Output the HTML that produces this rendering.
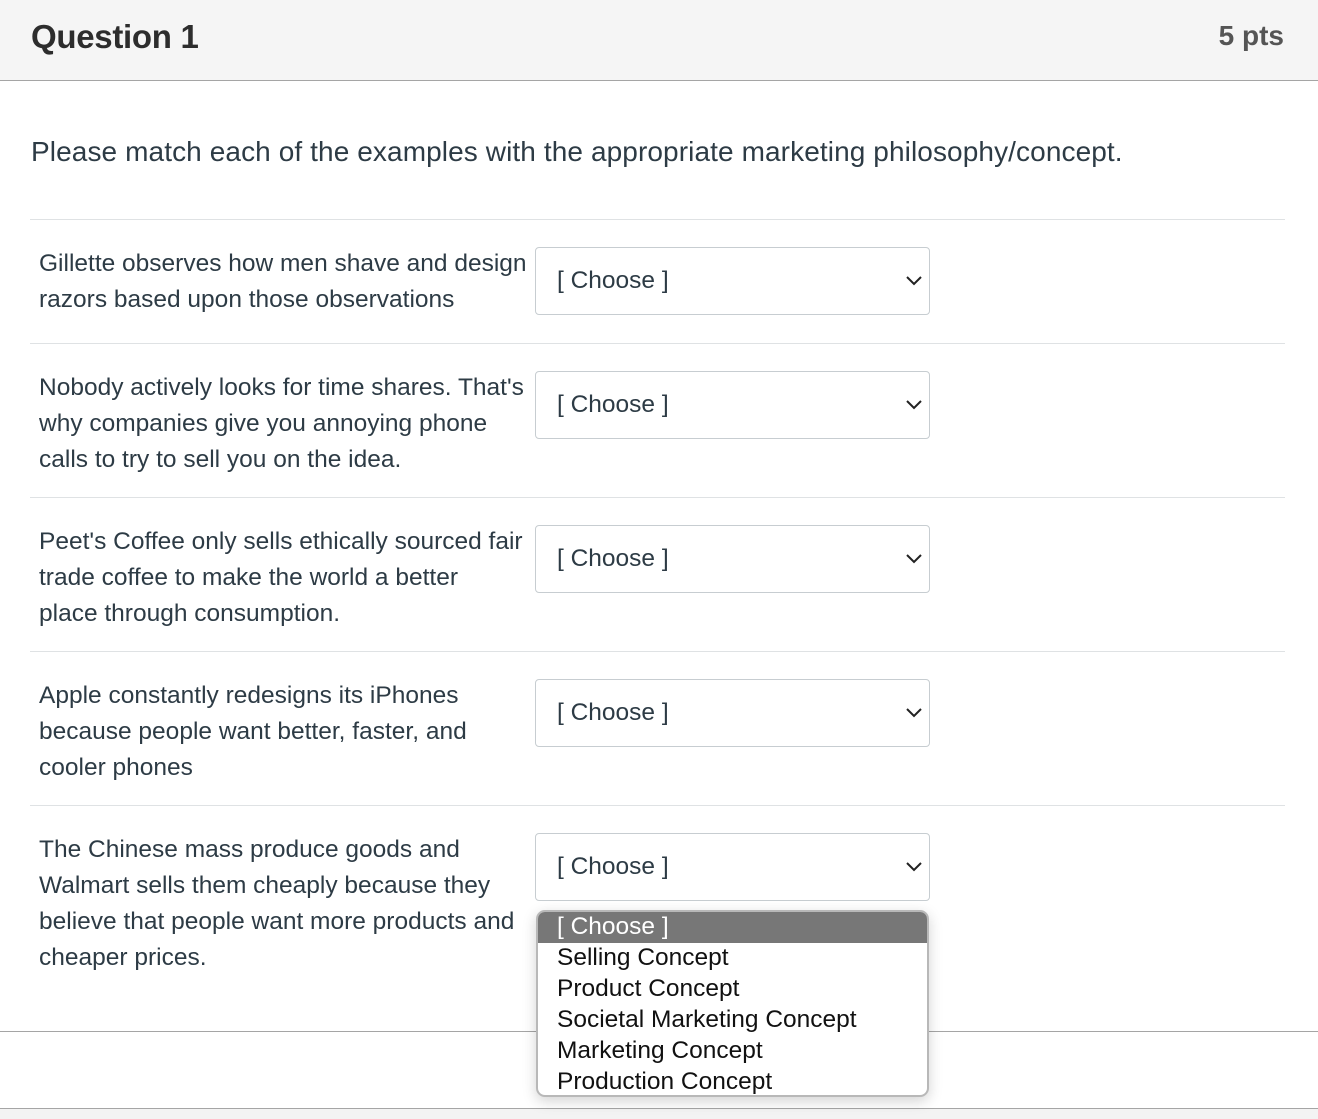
<!DOCTYPE html>
<html><head><style>
*{margin:0;padding:0;box-sizing:border-box}
body{width:1318px;height:1119px;position:relative;background:#fff;font-family:"Liberation Sans",Arial,sans-serif;color:#2d3b45;overflow:hidden}
.hdr{position:absolute;left:0;top:0;width:1318px;height:81px;background:#f5f5f5;border-bottom:1px solid #a5a5a5}
.q{position:absolute;left:31px;top:18px;font-size:33px;font-weight:bold;color:#2d2d2d;letter-spacing:-0.3px}
.pts{position:absolute;right:34px;top:20px;font-size:28px;font-weight:bold;color:#555}
.intro{position:absolute;left:31px;top:136px;font-size:28px;color:#2d3b45;letter-spacing:0.1px;white-space:nowrap}
.sep{position:absolute;left:30px;width:1255px;height:1px;background:#dfe2e4}
.txt{position:absolute;left:39px;font-size:24.5px;line-height:36px;color:#2d3b45;white-space:nowrap}
.sel{position:absolute;left:535px;width:395px;height:68px;border:1px solid #c7cdd1;border-radius:4px;background:#fff}
.sel span{position:absolute;left:21px;top:19px;font-size:24.5px;color:#2d3b45}
.sel svg{position:absolute;right:5px;top:25px}
.full{position:absolute;left:0;width:1318px;height:1px;background:#a5a5a5}
.dd{position:absolute;left:536px;top:910px;width:393px;height:187px;border:2px solid #b8b8b8;border-radius:9px;background:#fff;overflow:hidden;box-shadow:0 4px 14px rgba(0,0,0,.18)}
.dd div{height:31px;line-height:29px;padding-left:19px;font-size:24.5px;color:#111}
.dd div.h{background:#777;color:#fff}
</style></head><body>
<div class="hdr"><div class="q">Question 1</div><div class="pts">5 pts</div></div>
<div class="intro">Please match each of the examples with the appropriate marketing philosophy/concept.</div>

<div class="sep" style="top:219px"></div>
<div class="txt" style="top:246px">Gillette observes how men shave and design<br>razors based upon those observations</div>
<div class="sel" style="top:247px"><span>[ Choose ]</span><svg width="20" height="14" viewBox="0 0 20 14"><path d="M3 4l7 7 7-7" fill="none" stroke="#222" stroke-width="2"/></svg></div>

<div class="sep" style="top:343px"></div>
<div class="txt" style="top:370px">Nobody actively looks for time shares. That's<br>why companies give you annoying phone<br>calls to try to sell you on the idea.</div>
<div class="sel" style="top:371px"><span>[ Choose ]</span><svg width="20" height="14" viewBox="0 0 20 14"><path d="M3 4l7 7 7-7" fill="none" stroke="#222" stroke-width="2"/></svg></div>

<div class="sep" style="top:497px"></div>
<div class="txt" style="top:524px">Peet's Coffee only sells ethically sourced fair<br>trade coffee to make the world a better<br>place through consumption.</div>
<div class="sel" style="top:525px"><span>[ Choose ]</span><svg width="20" height="14" viewBox="0 0 20 14"><path d="M3 4l7 7 7-7" fill="none" stroke="#222" stroke-width="2"/></svg></div>

<div class="sep" style="top:651px"></div>
<div class="txt" style="top:678px">Apple constantly redesigns its iPhones<br>because people want better, faster, and<br>cooler phones</div>
<div class="sel" style="top:679px"><span>[ Choose ]</span><svg width="20" height="14" viewBox="0 0 20 14"><path d="M3 4l7 7 7-7" fill="none" stroke="#222" stroke-width="2"/></svg></div>

<div class="sep" style="top:805px"></div>
<div class="txt" style="top:832px">The Chinese mass produce goods and<br>Walmart sells them cheaply because they<br>believe that people want more products and<br>cheaper prices.</div>
<div class="sel" style="top:833px"><span>[ Choose ]</span><svg width="20" height="14" viewBox="0 0 20 14"><path d="M3 4l7 7 7-7" fill="none" stroke="#222" stroke-width="2"/></svg></div>

<div class="full" style="top:1031px"></div>
<div class="full" style="top:1108px"></div>
<div style="position:absolute;left:0;top:1109px;width:1318px;height:10px;background:#f3f3f3"></div>

<div class="dd">
<div class="h">[ Choose ]</div>
<div>Selling Concept</div>
<div>Product Concept</div>
<div>Societal Marketing Concept</div>
<div>Marketing Concept</div>
<div>Production Concept</div>
</div>
</body></html>
